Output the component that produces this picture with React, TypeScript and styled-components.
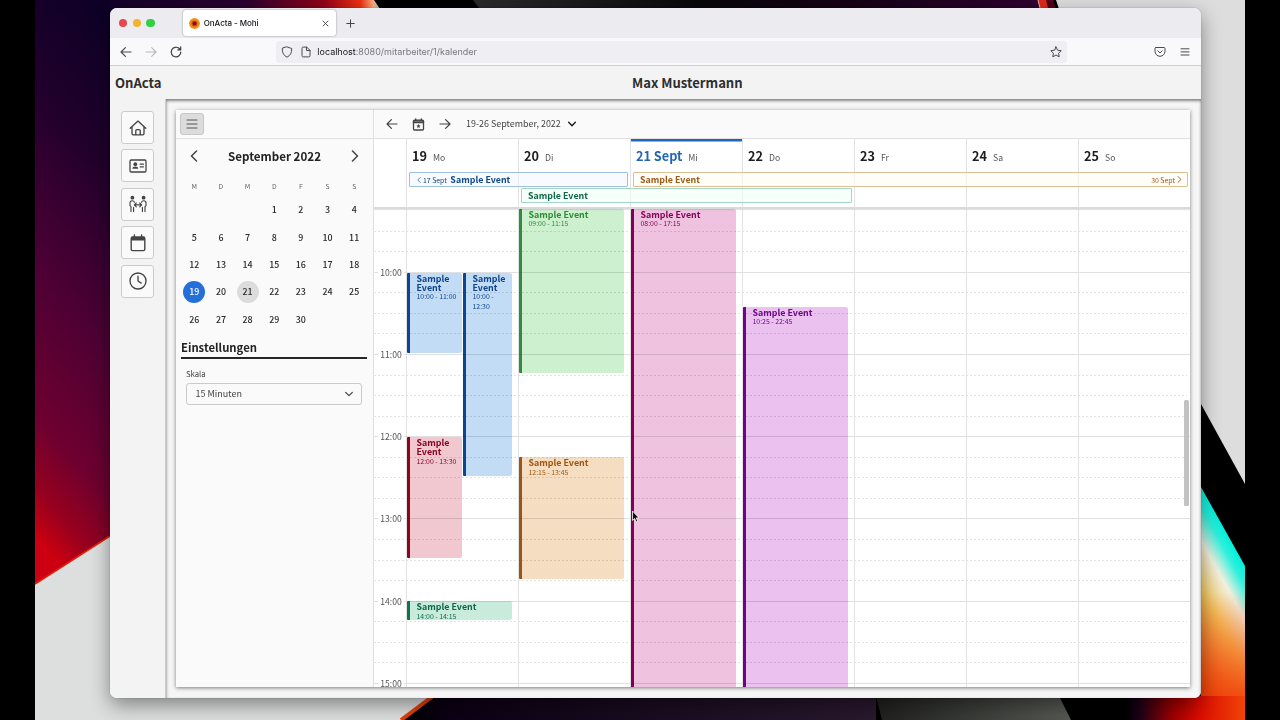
import React from 'react';
import styled, { createGlobalStyle, css } from 'styled-components';

const GlobalStyle = createGlobalStyle`
  * { box-sizing: border-box; }
  body { margin: 0; background: #000; overflow: hidden; }
`;

const SANS = '"Noto Sans CJK SC", "Noto Sans", sans-serif';
const UI = 'Inter, "Liberation Sans", sans-serif';

const HOUR = 82.26;
const DAY_WIDTH = 112;
const VISIBLE_START = 9 * 60 + 15;

/* ---------- desktop ---------- */

const Desktop = styled.div`
  position: relative;
  width: 1280px;
  height: 720px;
  padding: 8px 79px 22px 110px;
  overflow: hidden;
  background: #000;
  font-family: ${SANS};
  color: #333;
`;

const Backdrop = styled.svg`
  position: absolute;
  inset: 0;
`;

const Window = styled.div`
  position: relative;
  height: 690px;
  display: flex;
  flex-direction: column;
  border-radius: 7px;
  overflow: hidden;
  background: #f3f3f3;
`;

const WindowShadow = styled.div`
  border-radius: 7px;
  position: relative;
  box-shadow: 0 7px 20px rgba(0, 0, 0, 0.42), 0 0 1px rgba(0, 0, 0, 0.5);
`;

/* ---------- browser chrome ---------- */

const TabBar = styled.div`
  display: flex;
  align-items: center;
  flex: none;
  height: 30px;
  padding-left: 9px;
  background: #ececf0;
`;

const Light = styled.span<{ $color: string }>`
  width: 8.4px;
  height: 8.4px;
  margin-right: 5.2px;
  border-radius: 50%;
  background: ${(p) => p.$color};
`;

const Tab = styled.div`
  display: flex;
  align-items: center;
  width: 153px;
  height: 26px;
  margin-left: 23px;
  padding: 0 7px 0 6px;
  border-radius: 3px;
  background: #fff;
  box-shadow: 0 0 2px rgba(0, 0, 0, 0.45);
  font: 500 8px/10px ${UI};
  color: #15141a;
`;

const TabTitle = styled.span`
  flex: 1;
  margin-left: 4px;
  letter-spacing: -0.05px;
`;

const NewTab = styled.div`
  display: flex;
  margin-left: 10px;
`;

const NavBar = styled.div`
  display: flex;
  align-items: center;
  flex: none;
  height: 28px;
  padding: 0 11px 0 10px;
  border-bottom: 1px solid #cfcfd3;
  background: #f9f9fb;
`;

const NavButtons = styled.div`
  display: flex;
  gap: 13px;
  width: 158px;
`;

const AddressBar = styled.div`
  display: flex;
  align-items: center;
  width: 799px;
  height: 22px;
  padding: 0 5px;
  border-radius: 3px;
  background: #efeff3;
  font: 400 9px/12px ${UI};
  color: #77767e;
`;

const Address = styled.span`
  flex: 1;
  margin-left: 6px;
`;

const Host = styled.span`
  color: #15141a;
`;

const IconSlot = styled.span<{ $gap?: number }>`
  display: flex;
  margin-left: ${(p) => p.$gap ?? 0}px;
`;

/* ---------- application frame ---------- */

const AppHeader = styled.header`
  position: relative;
  z-index: 1;
  display: flex;
  align-items: center;
  flex: none;
  height: 33px;
  padding: 0 5px;
  background: #f3f3f3;
  font-size: 13.1px;
  font-weight: 700;
  line-height: 18px;
  color: #2d2d2d;
`;

const Brand = styled.span`
  width: 517px;
`;

const AppBody = styled.div`
  display: flex;
  flex: 1;
  min-height: 0;
`;

const Rail = styled.nav`
  display: flex;
  flex-direction: column;
  align-items: center;
  gap: 5.4px;
  width: 55px;
  padding-top: 12px;
  background: #f3f3f3;
`;

const RailButton = styled.button`
  display: flex;
  align-items: center;
  justify-content: center;
  width: 33px;
  height: 33px;
  padding: 0;
  border: 1px solid #cbcbcb;
  border-radius: 3px;
  background: #fafafa;
`;

const Main = styled.main`
  flex: 1;
  padding: 11px 11px 11px 10px;
  border-left: 1px solid #cbcbcb;
  background: #f6f6f6;
  box-shadow: inset 0 2px 3px rgba(0, 0, 0, 0.45), inset 2px 0 3px rgba(0, 0, 0, 0.06);
`;

const Card = styled.div`
  display: flex;
  height: 577px;
  background: #fff;
  box-shadow: 0 1px 4px rgba(0, 0, 0, 0.5);
`;

/* ---------- side panel ---------- */

const SidePanel = styled.aside`
  flex: none;
  width: 198px;
  border-right: 1px solid #e0e0e0;
  background: #fafafa;
`;

const PanelBar = styled.div`
  display: flex;
  align-items: center;
  height: 29px;
  padding-left: 4px;
  border-bottom: 1px solid #e0e0e0;
  background: #fafafa;
`;

const MenuButton = styled.button`
  display: flex;
  align-items: center;
  justify-content: center;
  width: 24px;
  height: 22px;
  padding: 0;
  border: 1px solid #c8c8c8;
  border-radius: 3px;
  background: #dcdcdc;
`;

const MonthNav = styled.div`
  display: flex;
  align-items: center;
  justify-content: space-between;
  height: 34px;
  padding: 0 12px 0 12px;
  font-size: 11.6px;
  font-weight: 700;
  line-height: 16px;
  color: #222;
`;

const WeekRow = styled.div<{ $head?: boolean }>`
  display: grid;
  grid-template-columns: repeat(7, 26.65px);
  align-items: center;
  justify-items: center;
  height: ${(p) => (p.$head ? 22 : 27.4)}px;
  margin-top: ${(p) => (p.$head ? 1.5 : 0)}px;
  padding-left: 5px;
  font-size: ${(p) => (p.$head ? 6.8 : 8.9)}px;
  font-weight: ${(p) => (p.$head ? 400 : 500)};
  line-height: 12px;
  color: ${(p) => (p.$head ? '#666' : '#2b2b2b')};
`;

const DayCell = styled.span<{ $state?: 'selected' | 'today' }>`
  display: flex;
  align-items: center;
  justify-content: center;
  width: 22px;
  height: 22px;
  border-radius: 50%;
  ${(p) => p.$state === 'selected' && css`background: #2470d8; color: #fff;`}
  ${(p) => p.$state === 'today' && css`background: #dcdcdc;`}
`;

const SectionTitle = styled.h2`
  height: 22px;
  margin: 4px 6px 0 5px;
  border-bottom: 2.4px solid #262626;
  font-size: 11.3px;
  font-weight: 700;
  line-height: 20px;
  color: #222;
`;

const FieldLabel = styled.label`
  display: block;
  margin: 9px 0 3px 10px;
  font-size: 7.7px;
  line-height: 12px;
  color: #444;
`;

const Select = styled.div`
  display: flex;
  align-items: center;
  justify-content: space-between;
  width: 176px;
  height: 22px;
  margin-left: 10px;
  padding: 0 7px 0 8.5px;
  border: 1px solid #cacaca;
  border-radius: 3px;
  font-size: 9px;
  line-height: 12px;
  color: #444;
`;

/* ---------- calendar ---------- */

const Calendar = styled.section`
  display: flex;
  flex-direction: column;
  width: 816px;
  overflow: hidden;
`;

const CalendarBar = styled(PanelBar)`
  flex: none;
  padding-left: 12px;
  gap: 14px;
`;

const Range = styled.div`
  display: flex;
  align-items: center;
  gap: 6px;
  margin-left: 1px;
  font-size: 8.95px;
  line-height: 12px;
  color: #444;
`;

const Head = styled.div`
  position: relative;
  z-index: 1;
  display: grid;
  flex: none;
  grid-template-columns: 32px repeat(7, ${DAY_WIDTH}px);
  grid-template-rows: 33px 16px 21px;
  height: 70px;
  border-bottom: 2px solid #d9d9d9;
  background: #fff;
  box-shadow: 0 1px 1px rgba(0, 0, 0, 0.1);
`;

const DayHead = styled.div<{ $index: number; $today?: boolean }>`
  display: flex;
  align-items: baseline;
  gap: 6px;
  grid-column: ${(p) => p.$index + 2};
  grid-row: 1 / 4;
  padding: 7px 0 0 5px;
  border-left: 1px solid #e2e2e2;
  font-size: 12.7px;
  font-weight: 700;
  line-height: 20px;
  color: ${(p) => (p.$today ? '#2065b8' : '#1c1c1c')};
  ${(p) => p.$today && css`box-shadow: inset 0 2.6px #2364b8;`}
`;

const Weekday = styled.span`
  font-size: 8.7px;
  font-weight: 400;
  color: #555;
`;

const AllDay = styled.div<{ $from: number; $to: number; $row: number; $ink: string; $line: string; $tint: string }>`
  display: flex;
  align-items: center;
  grid-column: ${(p) => p.$from + 2} / ${(p) => p.$to + 2};
  grid-row: ${(p) => p.$row};
  height: 15.4px;
  margin: 0 2px 0 3px;
  padding: 0 6px;
  border: 1px solid ${(p) => p.$line};
  border-radius: 1px;
  background: ${(p) => p.$tint};
  font-size: 8.9px;
  font-weight: 700;
  line-height: 12px;
  color: ${(p) => p.$ink};
`;

const Continues = styled.span<{ $end?: boolean }>`
  display: flex;
  align-items: center;
  gap: 1px;
  margin-left: ${(p) => (p.$end ? 'auto' : '0')};
  margin-right: ${(p) => (p.$end ? '-2px' : '3.5px')};
  font-size: 6.9px;
  font-weight: 400;
`;

const TimeGrid = styled.div`
  position: relative;
  flex: 1;
  min-height: 0;
  padding-top: 1px;
  overflow: hidden;
`;

const HourBlock = styled.div<{ $first?: boolean }>`
  display: grid;
  grid-template-columns: 32px 1fr;
  grid-template-rows: repeat(${(p) => (p.$first ? 3 : 4)}, ${HOUR / 4}px);
`;

const HourLabel = styled.span`
  display: block;
  width: 26px;
  margin-top: -6px;
  margin-left: 4px;
  font-size: 8.65px;
  line-height: 12px;
  text-align: center;
  color: #555;
  background: #fff;
`;

const HourLine = styled.div`
  grid-column: 1 / 3;
  grid-row: 1;
  height: 1px;
  background: #e0e0e0;
`;

const LabelSlot = styled.div`
  grid-column: 1;
  grid-row: 1;
  height: 0;
`;

const QuarterLine = styled.div<{ $row: number }>`
  grid-column: 1 / 3;
  grid-row: ${(p) => p.$row};
  height: 1px;
  margin-right: 3px;
  background: repeating-linear-gradient(90deg, #e2e2e2 0 2px, transparent 2px 4px);
`;

const EventLayer = styled.div`
  position: absolute;
  inset: 0 0 auto 32px;
  display: grid;
  grid-template-columns: repeat(7, ${DAY_WIDTH}px);
  height: 490px;
`;

const DayColumn = styled.div`
  display: grid;
  grid-template-columns: 1fr;
  grid-template-rows: repeat(71, ${HOUR / 12}px);
  border-left: 1px solid #e2e2e2;
`;

const EventBox = styled.article<{ $start: number; $end: number; $left: number; $width: number; $ink: string; $bar: string; $tint: string; $clipped: boolean }>`
  grid-column: 1;
  grid-row: ${(p) => p.$start + 1} / ${(p) => p.$end + 1};
  width: ${(p) => p.$width}px;
  margin: ${(p) => (p.$clipped ? 0 : 2)}px 0 0 ${(p) => p.$left}px;
  padding: 1px 2px 0 6.5px;
  border-left: 3px solid ${(p) => p.$bar};
  border-radius: 1px 2px 2px 1px;
  background: ${(p) => p.$tint};
  color: ${(p) => p.$ink};
  mix-blend-mode: multiply;
`;

const EventTitle = styled.div`
  font-size: 8.9px;
  font-weight: 700;
  line-height: 9.4px;
`;

const EventTime = styled.div`
  font-size: 6.9px;
  font-weight: 400;
  line-height: 9.4px;
`;

const ScrollThumb = styled.div`
  position: absolute;
  top: 191px;
  right: 1px;
  width: 5px;
  height: 106px;
  border-radius: 1.5px;
  background: #c2c2c2;
`;

const Pointer = styled.svg`
  position: absolute;
  left: 631px;
  top: 510px;
`;

/* ---------- icons ---------- */

type IconProps = { w: number; h?: number; vb: string; sw?: number; color?: string; children: React.ReactNode };
const Icon = ({ w, h = w, vb, sw = 1.2, color = '#444', children }: IconProps) => (
  <svg width={w} height={h} viewBox={vb} fill="none" stroke={color} strokeWidth={sw} strokeLinecap="round" strokeLinejoin="round">
    {children}
  </svg>
);

const Chevron = ({ dir, size = 11, sw = 1.5, color }: { dir: 'left' | 'right' | 'down'; size?: number; sw?: number; color?: string }) => (
  <Icon w={size} vb="0 0 12 12" sw={sw} color={color}>
    <path d={{ left: 'M8.5 1 3.5 6l5 5', right: 'M3.5 1l5 5-5 5', down: 'M2 4l4 4 4-4' }[dir]} />
  </Icon>
);

const Arrow = ({ right, color, size = 12 }: { right?: boolean; color?: string; size?: number }) => (
  <Icon w={size} vb="0 0 12 12" color={color}>
    <path d={right ? 'M1 6h10M6.6 1.6 11 6l-4.4 4.4' : 'M11 6H1M5.4 1.6 1 6l4.4 4.4'} />
  </Icon>
);

const railIcons = [
  <Icon key="home" w={18} vb="0 0 18 18" sw={1.35}>
    <path d="M1.2 9.2 9 2.1l7.8 7.1M3 8v6.6c0 .8.5 1.3 1.3 1.3h9.4c.8 0 1.3-.5 1.3-1.3V8M6.8 15.8v-4.2c0-.6.4-1 1-1h2.4c.6 0 1 .4 1 1v4.2" />
  </Icon>,
  <Icon key="card" w={18} vb="0 0 18 18" sw={1.3}>
    <rect x="1" y="3" width="16" height="12" rx="1.2" />
    <circle cx="6.3" cy="7.2" r="1.9" fill="#444" stroke="none" />
    <path d="M3.4 11.8c0-1.6 1.2-2.4 2.9-2.4s2.9.8 2.9 2.4z" fill="#444" stroke="none" />
    <path d="M11.2 7.2h3.2M11.2 9.8h3.2" />
  </Icon>,
  <Icon key="people" w={18} vb="0 0 18 18" sw={1.15}>
    <circle cx="3.4" cy="2.7" r="1.9" fill="#444" stroke="none" />
    <circle cx="14.6" cy="2.7" r="1.9" fill="#444" stroke="none" />
    <path d="M5.5 7.2C5.1 6.1 4.5 5.7 3.2 5.7 1.6 5.7 1 6.6 1 8v2.6l1 1v5M4.6 16.6v-4.2" />
    <path d="M12.5 7.2c.4-1.1 1-1.5 2.3-1.5C16.4 5.700 17 6.600 17 8v2.600l-1 1v5M13.400 16.600v-4.200" />
    <path d="M5.600 9.900h6.800M7.300 8 5.300 9.900l2 1.900M10.700 8l2 1.900-2 1.900" />
  </Icon>,
  <Icon key="calendar" w={18} vb="0 0 18 18" sw={1.4}>
    <rect x="2.200" y="3" width="13.600" height="13.600" rx="1.400" />
    <path d="M2.200 3h13.600v3.600H2.200z" fill="#444" stroke="none" />
    <path d="M5.400 1v2M12.600 1v2" />
  </Icon>,
  <Icon key="clock" w={18} vb="0 0 18 18" sw={1.35}>
    <circle cx="9" cy="9" r="8" />
    <path d="M9 4.200V9l3.200 2.100" />
  </Icon>,
];

/* ---------- data ---------- */

const tones = {
  blue: { ink: '#0d428c', bar: '#0a4694', tint: '#c3dcf5' },
  red: { ink: '#8c0622', bar: '#8e0420', tint: '#f1c8d0' },
  teal: { ink: '#0c6a48', bar: '#0d7350', tint: '#c9ebdb' },
  green: { ink: '#2f8c36', bar: '#338c3c', tint: '#cdf0cf' },
  orange: { ink: '#a2540f', bar: '#9c5518', tint: '#f5ddc1' },
  pink: { ink: '#86055a', bar: '#80005a', tint: '#efc3df' },
  violet: { ink: '#70088a', bar: '#6c0586', tint: '#eac1ef' },
};

type CalEvent = { day: number; from: string; to: string; tone: keyof typeof tones; left?: number; width?: number };
const events: CalEvent[] = [
  { day: 0, from: '10:00', to: '11:00', tone: 'blue', width: 54.5 },
  { day: 0, from: '10:00', to: '12:30', tone: 'blue', left: 56, width: 49 },
  { day: 0, from: '12:00', to: '13:30', tone: 'red', width: 54.5 },
  { day: 0, from: '14:00', to: '14:15', tone: 'teal' },
  { day: 1, from: '09:00', to: '11:15', tone: 'green' },
  { day: 1, from: '12:15', to: '13:45', tone: 'orange' },
  { day: 2, from: '08:00', to: '17:15', tone: 'pink' },
  { day: 3, from: '10:25', to: '22:45', tone: 'violet' },
];

const slotOf = (time: string) => {
  const [h, m] = time.split(':').map(Number);
  return Math.min(70, Math.max(0, (h * 60 + m - VISIBLE_START) / 5));
};

const weekdays = ['Mo', 'Di', 'Mi', 'Do', 'Fr', 'Sa', 'So'];
const weeks = Array.from({ length: 5 }, (_, w) => Array.from({ length: 7 }, (_, d) => w * 7 + d - 2));

/* ---------- views ---------- */

const Wallpaper = () => (
  <Backdrop width="1280" height="720" viewBox="0 0 1280 720">
    <defs>
      <linearGradient id="left" x1="0.6" y1="0" x2="0.4" y2="1">
        <stop offset="0" stopColor="#0d0026" />
        <stop offset=".25" stopColor="#20002c" />
        <stop offset=".55" stopColor="#4d0034" />
        <stop offset=".8" stopColor="#6e0030" />
        <stop offset=".92" stopColor="#98001e" />
        <stop offset="1" stopColor="#cc0010" />
      </linearGradient>
      <linearGradient id="topLeft">
        <stop offset="0" stopColor="#120029" />
        <stop offset=".5" stopColor="#2a0030" />
        <stop offset=".78" stopColor="#8c0018" />
        <stop offset=".92" stopColor="#f03010" />
        <stop offset=".97" stopColor="#ffb080" />
        <stop offset="1" stopColor="#50e0e0" />
      </linearGradient>
      <linearGradient id="top">
        <stop offset="0" stopColor="#2b2b2b" />
        <stop offset=".4" stopColor="#080808" />
        <stop offset=".7" stopColor="#170018" />
        <stop offset="1" stopColor="#300030" />
      </linearGradient>
      <linearGradient id="glow" gradientUnits="userSpaceOnUse" x1="1223" y1="526" x2="1135" y2="575">
        <stop offset="0" stopColor="#00f0dc" />
        <stop offset=".1" stopColor="#30f0dc" />
        <stop offset=".26" stopColor="#f0efe0" />
        <stop offset=".5" stopColor="#f4cb60" />
        <stop offset=".85" stopColor="#f08438" />
        <stop offset="1.000" stopColor="#f06020" />
      </linearGradient>
      <linearGradient id="heat" x1="0" y1="0" x2="0" y2="1">
        <stop offset="0.45" stopColor="#f04000" stopOpacity="0" />
        <stop offset="1" stopColor="#f03000" stopOpacity="0.95" />
      </linearGradient>
      <linearGradient id="bottom">
        <stop offset="0" stopColor="#000" />
        <stop offset=".1" stopColor="#0c0014" />
        <stop offset="1" stopColor="#29192e" />
      </linearGradient>
      <linearGradient id="bottomGray">
        <stop offset="0" stopColor="#20211e" />
        <stop offset="1" stopColor="#565954" />
      </linearGradient>
      <linearGradient id="ember">
        <stop offset="0" stopColor="#000" />
        <stop offset=".12" stopColor="#1c0018" />
        <stop offset=".4" stopColor="#a00000" />
        <stop offset=".62" stopColor="#dc0c00" />
        <stop offset="1" stopColor="#f04408" />
      </linearGradient>
    </defs>
    <path d="M35 0H140V517L35 584z" fill="url(#left)" />
    <path d="M110 536 35 584V720H401L433 698V536z" fill="#dddfde" />
    <path d="M35 584 110 536" stroke="#e81c08" strokeWidth="1.500" />
    <path d="M110 0H374L382 12H110z" fill="url(#topLeft)" />
    <path d="M473 0H1040V12H482z" fill="url(#top)" />
    <path d="M1038 0H1051L1055 12H1041z" fill="#e0261a" />
    <path d="M1038 0 1041 12" stroke="#f0b0a0" strokeWidth="1" />
    <path d="M1046 0H1053L1057 12H1049z" fill="#500018" />
    <path d="M1056 0H1245V484L1201 404 1060 12z" fill="#dcdddc" />
    <path d="M1201 487 1245 566V720H1201z" fill="url(#glow)" />
    <path d="M1201 487 1245 566V720H1201z" fill="url(#heat)" />
    <path d="M401 720 433 698H876V720z" fill="url(#bottom)" />
    <path d="M401 720 433 696" stroke="#e04008" strokeWidth="4" />
    <path d="M876 696H1059L1071 720H882z" fill="url(#bottomGray)" />
    <path d="M1125 696H1245V720H1125z" fill="url(#ember)" />
  </Backdrop>
);

const BrowserChrome = () => (
  <>
    <TabBar>
      <Light $color="#e8454c" />
      <Light $color="#f2b42e" />
      <Light $color="#2fd044" />
      <Tab>
        <svg width="11" height="11" viewBox="0 0 11 11">
          <circle cx="5.500" cy="5.500" r="5.400" fill="#f28c1c" />
          <circle cx="5.500" cy="5.500" r="3.100" fill="#c8541c" />
          <circle cx="5.500" cy="5.500" r="1.900" fill="#8c0c10" />
        </svg>
        <TabTitle>OnActa - Mohi</TabTitle>
        <Icon w={7} vb="0 0 7 7" sw={0.9}><path d="M1 1l5 5M6 1 1 6" /></Icon>
      </Tab>
      <NewTab><Icon w={9} vb="0 0 9 9" sw={1}><path d="M4.500.800v7.400M.800 4.500h7.400" /></Icon></NewTab>
    </TabBar>
    <NavBar>
      <NavButtons>
        <Arrow color="#4a4a50" />
        <Arrow right color="#b9b9bf" />
        <Icon w={12} vb="0 0 12 12" color="#3c3c42">
          <path d="M10.800 6A4.800 4.800 0 1 1 9 2.300l1.400 1.300M10.700.900v3H7.800" />
        </Icon>
      </NavButtons>
      <AddressBar>
        <Icon w={12} vb="0 0 12 12" sw={1} color="#4a4a50">
          <path d="M6 .900 10.700 2.500c.200 4.200-1.300 7-4.700 8.700C2.600 9.500 1.100 6.700 1.300 2.500z" />
        </Icon>
        <IconSlot $gap={8}>
          <Icon w={10} h={12} vb="0 0 10 12" sw={1} color="#4a4a50">
            <path d="M1 2.200c0-.700.400-1.100 1.100-1.100h3.600L9 4.300v5.500c0 .700-.400 1.100-1.100 1.100H2.100C1.400 10.900 1 10.500 1 9.800zM5.500 1.200v3.300H9" />
          </Icon>
        </IconSlot>
        <Address><Host>localhost</Host>:8080/mitarbeiter/1/kalender</Address>
        <Icon w={12} vb="0 0 12 12" sw={1} color="#4a4a50">
          <path d="m6 .900 1.600 3.300 3.600.500-2.600 2.500.600 3.600L6 9.100l-3.200 1.700.600-3.600L.800 4.700l3.600-.500z" />
        </Icon>
      </AddressBar>
      <IconSlot $gap={87}>
        <Icon w={12} vb="0 0 12 12" sw={1} color="#4a4a50">
          <path d="M2 1.500h8c.600 0 1 .400 1 1v2.800a5 5 0 0 1-10 0V2.500c0-.600.400-1 1-1zM3.800 4.800 6 6.900l2.200-2.100" />
        </Icon>
      </IconSlot>
      <IconSlot $gap={14}>
        <Icon w={10} vb="0 0 10 10" sw={1} color="#4a4a50"><path d="M1 1.800h8M1 4.900h8M1 8h8" /></Icon>
      </IconSlot>
    </NavBar>
  </>
);

const MonthPicker = () => (
  <>
    <MonthNav>
      <Chevron dir="left" size={12} />
      <span>September 2022</span>
      <Chevron dir="right" size={12} />
    </MonthNav>
    <WeekRow $head>{['M', 'D', 'M', 'D', 'F', 'S', 'S'].map((d, i) => <span key={i}>{d}</span>)}</WeekRow>
    {weeks.map((week, w) => (
      <WeekRow key={w}>
        {week.map((day) => (
          <DayCell key={day} $state={day === 19 ? 'selected' : day === 21 ? 'today' : undefined}>
            {day > 0 && day <= 30 ? day : ''}
          </DayCell>
        ))}
      </WeekRow>
    ))}
  </>
);

const WeekHead = () => (
  <Head>
    {weekdays.map((name, i) => (
      <DayHead key={name} $index={i} $today={i === 2}>
        {i === 2 ? '21 Sept' : 19 + i}
        <Weekday>{name}</Weekday>
      </DayHead>
    ))}
    <AllDay $from={0} $to={2} $row={2} $ink="#12488c" $line="#9fc0dc" $tint="rgba(240, 248, 255, 0.5)">
      <Continues><Chevron dir="left" size={6} sw={1.6} color="#3c6898" />17 Sept</Continues>
      Sample Event
    </AllDay>
    <AllDay $from={2} $to={7} $row={2} $ink="#a05a14" $line="#dcbf92" $tint="rgba(255, 251, 242, 0.6)">
      Sample Event
      <Continues $end>30 Sept<Chevron dir="right" size={7} sw={1.6} color="#a05a14" /></Continues>
    </AllDay>
    <AllDay $from={1} $to={4} $row={3} $ink="#0d6846" $line="#a4d4c4" $tint="rgba(242, 255, 249, 0.6)">
      Sample Event
    </AllDay>
  </Head>
);

const WeekGrid = () => (
  <TimeGrid>
    <HourBlock $first>
      {[2, 3].map((r) => <QuarterLine key={r} $row={r} />)}
    </HourBlock>
    {[10, 11, 12, 13, 14, 15].map((hour) => (
      <HourBlock key={hour}>
        <HourLine />
        <LabelSlot><HourLabel>{hour}:00</HourLabel></LabelSlot>
        {[2, 3, 4].map((r) => <QuarterLine key={r} $row={r} />)}
      </HourBlock>
    ))}
    <EventLayer>
      {weekdays.map((name, day) => (
        <DayColumn key={name}>
          {events.filter((e) => e.day === day).map((e) => (
            <EventBox
              key={e.from + e.to}
              $start={slotOf(e.from)}
              $end={slotOf(e.to)}
              $clipped={slotOf(e.from) === 0}
              $left={e.left ?? 0}
              $width={e.width ?? 104.5}
              $ink={tones[e.tone].ink}
              $bar={tones[e.tone].bar}
              $tint={tones[e.tone].tint}
            >
              <EventTitle>Sample Event</EventTitle>
              <EventTime>{e.from} - {e.to}</EventTime>
            </EventBox>
          ))}
        </DayColumn>
      ))}
    </EventLayer>
    <ScrollThumb />
  </TimeGrid>
);

export default function App() {
  return (
    <Desktop>
      <GlobalStyle />
      <Wallpaper />
      <WindowShadow>
        <Window>
          <BrowserChrome />
          <AppHeader>
            <Brand>OnActa</Brand>
            <span>Max Mustermann</span>
          </AppHeader>
          <AppBody>
            <Rail>{railIcons.map((icon) => <RailButton key={icon.key}>{icon}</RailButton>)}</Rail>
            <Main>
              <Card>
                <SidePanel>
                  <PanelBar>
                    <MenuButton><Icon w={12} vb="0 0 12 12" color="#555"><path d="M1 2h10M1 6h10M1 10h10" /></Icon></MenuButton>
                  </PanelBar>
                  <MonthPicker />
                  <SectionTitle>Einstellungen</SectionTitle>
                  <FieldLabel>Skala</FieldLabel>
                  <Select>15 Minuten<Chevron dir="down" size={10} /></Select>
                </SidePanel>
                <Calendar>
                  <CalendarBar>
                    <Arrow />
                    <Icon w={13} vb="0 0 13 13" sw={1.3}>
                      <rect x="1.500" y="2.200" width="10" height="9.800" rx="1" />
                      <path d="M1.500 3h10v1.600h-10zM3.700.800v1.400M9.300.800v1.400" />
                      <path d="m6.500 5.900.6 1.300 1.500.2-1.100 1 .3 1.500-1.300-.7-1.300.7.3-1.500-1.100-1 1.500-.2z" fill="#444" stroke="none" />
                    </Icon>
                    <Arrow right />
                    <Range>19-26 September, 2022<Chevron dir="down" size={10} sw={1.8} color="#222" /></Range>
                  </CalendarBar>
                  <WeekHead />
                  <WeekGrid />
                </Calendar>
              </Card>
            </Main>
          </AppBody>
        </Window>
      </WindowShadow>
      <Pointer width="9" height="14" viewBox="0 0 9 14">
        <path d="M1.500 1v9.500l2.200-2 1.500 3.600 1.600-.700-1.500-3.500h2.800z" fill="#111" stroke="#fff" strokeWidth=".8" />
      </Pointer>
    </Desktop>
  );
}
